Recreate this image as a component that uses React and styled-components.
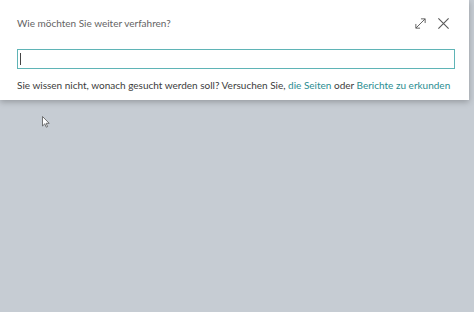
import React from "react";
import styled, { createGlobalStyle } from "styled-components";

const Global = createGlobalStyle`
  html, body {
    margin: 0;
    padding: 0;
    height: 100%;
    background: #c6ccd3;
    font-family: Lato, "Open Sans", sans-serif;
  }
  #root {
    height: 100%;
  }
`;

const Page = styled.div`
  position: relative;
  height: 312px;
  background: #c6ccd3;
  overflow: hidden;
`;

const Dialog = styled.div`
  width: 469px;
  height: 100px;
  background: #fff;
  box-sizing: border-box;
  padding: 0 13px 0 17px;
  box-shadow: 0 2px 6px rgba(0, 0, 0, 0.25);
  display: flex;
  flex-direction: column;
`;

const Header = styled.div`
  display: flex;
  align-items: center;
  justify-content: space-between;
  height: 44px;
  padding-top: 1px;
`;

const Title = styled.div`
  font-size: 10px;
  color: #646464;
`;

const Tools = styled.div`
  display: flex;
  gap: 10px;
  align-items: center;
  margin-right: 6px;
`;

const IconButton = styled.button`
  border: 0;
  background: none;
  padding: 0;
  width: 13px;
  height: 13px;
  display: flex;
  color: #5a5a5a;
`;

const Field = styled.div`
  position: relative;
  margin-top: 4px;
  width: 438px;
  height: 20px;
`;

const Input = styled.input`
  display: block;
  height: 20px;
  width: 100%;
  box-sizing: border-box;
  border: 1px solid #5fb4b6;
  outline: none;
  padding: 0 2px;
  font: inherit;
  caret-color: transparent;
`;

const Caret = styled.span`
  position: absolute;
  left: 3px;
  top: 4px;
  width: 1px;
  height: 12px;
  background: #444;
`;

const Hint = styled.p`
  margin: 10px 0 0;
  font-size: 10px;
  color: #3c3c3c;
  white-space: nowrap;
`;

const Link = styled.a`
  color: #2a8d91;
  text-decoration: none;
`;

const Pointer = styled.svg`
  position: absolute;
  left: 42px;
  top: 116px;
`;

export default function App() {
  return (
    <Page>
      <Global />
      <Dialog>
        <Header>
          <Title>Wie möchten Sie weiter verfahren?</Title>
          <Tools>
            <IconButton aria-label="Maximieren">
              <svg width="13" height="13" viewBox="0 0 14 14" fill="none" stroke="currentColor" strokeWidth="1">
                <path d="M2 12 L12 2 M7.5 2 H12 V6.5 M2 7.5 V12 H6.5" />
              </svg>
            </IconButton>
            <IconButton aria-label="Schließen">
              <svg width="13" height="13" viewBox="0 0 14 14" fill="none" stroke="currentColor" strokeWidth="1.2">
                <path d="M1.5 1.5 L12.5 12.5 M12.5 1.5 L1.5 12.5" />
              </svg>
            </IconButton>
          </Tools>
        </Header>
        <Field>
          <Input />
          <Caret />
        </Field>
        <Hint>
          Sie wissen nicht, wonach gesucht werden soll? Versuchen Sie,{" "}
          <Link href="#">die Seiten</Link> oder <Link href="#">Berichte zu erkunden</Link>
        </Hint>
      </Dialog>
      <Pointer width="8" height="12" viewBox="0 0 8 12">
        <path d="M0.5 0.5 L0.5 10 L2.8 7.8 L4.3 11.2 L5.6 10.6 L4.1 7.3 L7.2 7.3 Z" fill="#fff" stroke="#555" strokeWidth="0.8" strokeLinejoin="round" />
      </Pointer>
    </Page>
  );
}
